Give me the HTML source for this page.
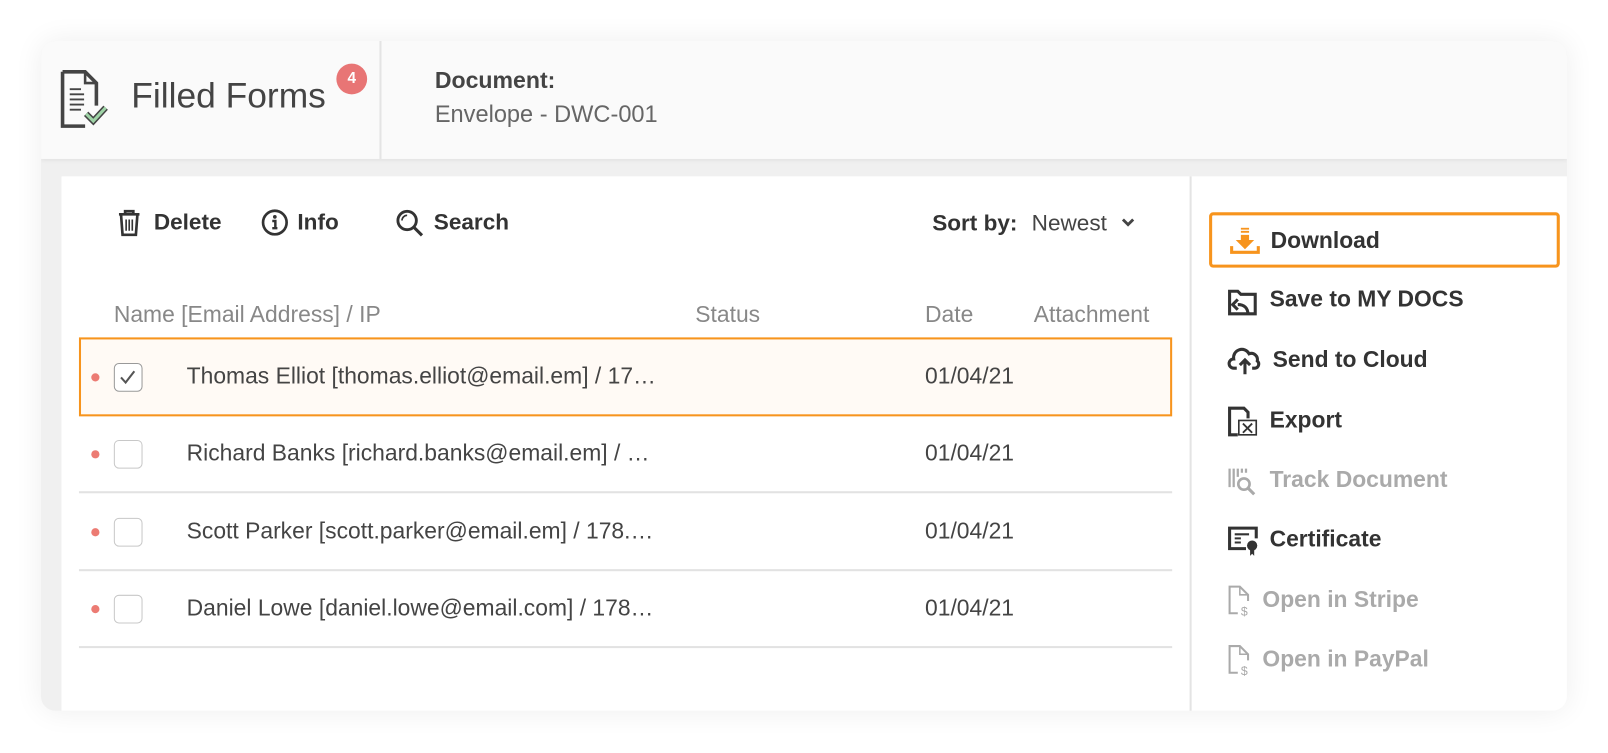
<!DOCTYPE html>
<html><head><meta charset="utf-8"><style>
*{box-sizing:border-box;margin:0;padding:0}
body{width:1608px;height:752px;background:#fff;font-family:"Liberation Sans",Arial,sans-serif;position:relative;overflow:hidden}
#w{position:absolute;left:0;top:0;width:1568px;height:734px;transform:scale(1.02551);transform-origin:0 0}
.card{position:absolute;left:40px;top:40px;width:1488px;height:653px;background:#f0f0f0;border-radius:14px;box-shadow:0 0 28px rgba(0,0,0,.07);overflow:hidden}
.hdr{position:absolute;left:0;top:0;width:1488px;height:115px;background:#fafafa;box-shadow:0 2px 4px rgba(0,0,0,.06)}
.abs{position:absolute}
.t{color:#333;font-weight:bold;font-size:22px}
.row{position:absolute;left:77px;width:1066px;height:76px;border-bottom:2px solid #e2e2e2}
.dot{position:absolute;left:12px;top:34px;width:8px;height:8px;border-radius:50%;background:#ec7b73}
.cb{position:absolute;left:34px;top:24px;width:28px;height:28px;border:1.5px solid #c8c8c8;border-radius:5px;background:#fff}
.nm{position:absolute;left:105px;top:24px;font-size:22.3px;color:#444}
.dt{position:absolute;left:825px;top:24px;font-size:22.3px;color:#444}
.it{position:absolute;left:1238px;font-size:22.3px;font-weight:bold;color:#333}
.gray{color:#aaa}
.th{position:absolute;top:294px;font-size:22.3px;color:#888}
</style></head><body><div id="w">
<div class="card">
 <div class="hdr">
  <svg class="abs" style="left:18px;top:27px" width="48" height="58" viewBox="0 0 48 58"><path d="M3 3h22l11 11v22M3 3v53h22" fill="none" stroke="#444" stroke-width="3.5"/><path d="M25 3v11h11" fill="none" stroke="#444" stroke-width="2.5"/><path d="M10 20h11M10 25h14M10 30h14M10 35h14M10 40h11" stroke="#444" stroke-width="1.8"/><path d="M26 44l7 7 12-13" fill="none" stroke="#444" stroke-width="6"/><path d="M26 44l7 7 12-13" fill="none" stroke="#9ed3a6" stroke-width="3"/></svg>
  <div class="abs" style="left:88px;top:35px;font-size:34.5px;color:#444">Filled Forms</div>
  <div class="abs" style="left:288px;top:22px;width:30px;height:30px;border-radius:50%;background:#e87575;color:#fff;font-size:15px;font-weight:bold;text-align:center;line-height:30px">4</div>
  <div class="abs" style="left:330px;top:0;width:2px;height:115px;background:#e4e4e4"></div>
  <div class="abs" style="left:384px;top:26px;font-size:22.5px;font-weight:bold;color:#444">Document:</div>
  <div class="abs" style="left:384px;top:58px;font-size:23px;color:#666">Envelope - DWC-001</div>
 </div>
</div>
<div class="abs" style="left:60px;top:172px;width:1468px;height:521px;background:#fff;border-bottom-right-radius:14px"></div>
<div class="abs" style="left:1160px;top:172px;width:2px;height:521px;background:#e4e4e4"></div>
<svg class="abs" style="left:114px;top:203px" width="24" height="28" viewBox="0 0 24 28"><path d="M2 6h20M8 6V3h8v3M4 6l1.5 20h13L20 6" fill="none" stroke="#333" stroke-width="2.6"/><path d="M9 11v11M12 11v11M15 11v11" stroke="#333" stroke-width="1.6"/></svg>
<div class="abs t" style="left:150px;top:204px">Delete</div>
<svg class="abs" style="left:254px;top:203px" width="28" height="28" viewBox="0 0 28 28"><circle cx="14" cy="14" r="11.5" fill="none" stroke="#333" stroke-width="2.6"/><circle cx="14" cy="8.5" r="1.8" fill="#333"/><path d="M11.5 12.5h3v7M11.5 19.5h5" fill="none" stroke="#333" stroke-width="2.4"/></svg>
<div class="abs t" style="left:290px;top:204px">Info</div>
<svg class="abs" style="left:385px;top:203px" width="30" height="30" viewBox="0 0 30 30"><circle cx="12" cy="12" r="9" fill="none" stroke="#333" stroke-width="2.8"/><path d="M18.5 18.5l8 8" stroke="#333" stroke-width="3"/><path d="M7 12a5 5 0 0 1 5-5" fill="none" stroke="#333" stroke-width="1.6"/></svg>
<div class="abs t" style="left:423px;top:204px">Search</div>
<div class="abs t" style="left:909px;top:205px">Sort by:</div>
<div class="abs" style="left:1006px;top:205px;font-size:22px;color:#444">Newest</div>
<svg class="abs" style="left:1093px;top:212px" width="14" height="10" viewBox="0 0 14 10"><path d="M2 2l5 5 5-5" fill="none" stroke="#444" stroke-width="2.8"/></svg>
<div class="th" style="left:111px">Name [Email Address] / IP</div>
<div class="th" style="left:678px">Status</div>
<div class="th" style="left:902px">Date</div>
<div class="th" style="left:1008px">Attachment</div>
<div class="abs" style="left:77px;top:329px;width:1066px;height:77px;border:2px solid #f7941d;background:#fffaf5"></div>
<div class="row" style="top:330px;border:none"><div class="dot"></div><div class="cb" style="border-color:#999"><svg width="25" height="25" viewBox="0 0 25 25"><path d="M6 13l4.5 5L19 7" fill="none" stroke="#555" stroke-width="2"/></svg></div><div class="nm">Thomas Elliot [thomas.elliot@email.em] / 17…</div><div class="dt">01/04/21</div></div>
<div class="row" style="top:405px"><div class="dot"></div><div class="cb"></div><div class="nm">Richard Banks [richard.banks@email.em] / …</div><div class="dt">01/04/21</div></div>
<div class="row" style="top:481px"><div class="dot"></div><div class="cb"></div><div class="nm">Scott Parker [scott.parker@email.em] / 178.…</div><div class="dt">01/04/21</div></div>
<div class="row" style="top:556px"><div class="dot"></div><div class="cb"></div><div class="nm">Daniel Lowe [daniel.lowe@email.com] / 178…</div><div class="dt">01/04/21</div></div>
<div class="abs" style="left:1179px;top:207px;width:342px;height:54px;border:3px solid #f7941d;border-radius:4px"></div>
<svg class="abs" style="left:1199px;top:222px" width="30" height="26" viewBox="0 0 30 26"><path d="M11 1h8M11 4h8" stroke="#f7941d" stroke-width="1.8"/><path d="M11 7h8v5h5l-9 9-9-9h5z" fill="#f7941d"/><path d="M2 18v6h26v-6" fill="none" stroke="#f7941d" stroke-width="3"/></svg>
<div class="it" style="left:1239px;top:222px">Download</div>
<svg class="abs" style="left:1197px;top:280px" width="32" height="30" viewBox="0 0 32 30"><path d="M2 26V4h8l3 3h14v19z" fill="none" stroke="#333" stroke-width="3"/><path d="M20 27c0-7-4-10-10-10M10 12l-5 5 5 5" fill="none" stroke="#333" stroke-width="3"/></svg>
<div class="it" style="top:279px">Save to MY DOCS</div>
<svg class="abs" style="left:1197px;top:337px" width="34" height="30" viewBox="0 0 34 30"><path d="M9 22H6a4 4 0 0 1 0-9 8 8 0 0 1 15-5 6 6 0 0 1 8 7 4 4 0 0 1-2 7h-3" fill="none" stroke="#333" stroke-width="3"/><path d="M17 28V14M12 19l5-5 5 5" fill="none" stroke="#333" stroke-width="3"/></svg>
<div class="it" style="left:1241px;top:338px">Send to Cloud</div>
<svg class="abs" style="left:1197px;top:396px" width="30" height="30" viewBox="0 0 30 30"><path d="M10 28H2V2h14l4 4v6" fill="none" stroke="#333" stroke-width="3"/><rect x="11" y="14" width="17" height="14" fill="#fff" stroke="#333" stroke-width="1.6"/><path d="M15 17l9 9M24 17l-9 9" stroke="#333" stroke-width="1.8"/></svg>
<div class="it" style="top:397px">Export</div>
<svg class="abs" style="left:1197px;top:455px" width="30" height="30" viewBox="0 0 30 30"><path d="M2 2v18M6 2v18M10 2v8M14 2v4M18 2v4" stroke="#aaa" stroke-width="2.2"/><circle cx="16" cy="17" r="5.5" fill="none" stroke="#aaa" stroke-width="2.6"/><path d="M20 21l6 6" stroke="#aaa" stroke-width="3"/></svg>
<div class="it gray" style="top:455px">Track Document</div>
<svg class="abs" style="left:1197px;top:513px" width="32" height="30" viewBox="0 0 32 30"><path d="M18 22H2V2h26v10" fill="none" stroke="#333" stroke-width="3"/><path d="M7 8h14M7 12h6M7 16h6" stroke="#333" stroke-width="2"/><circle cx="24" cy="19" r="5" fill="#333"/><path d="M22 23v6l2-2 2 2v-6" fill="#333"/></svg>
<div class="it" style="top:513px">Certificate</div>
<svg class="abs" style="left:1197px;top:570px" width="24" height="32" viewBox="0 0 24 32"><path d="M10 28H2V2h10l8 8v6" fill="none" stroke="#aaa" stroke-width="2"/><path d="M12 2v8h8" fill="none" stroke="#aaa" stroke-width="1.5"/><text x="13" y="30" font-size="12" fill="#aaa" font-family="Liberation Sans">$</text></svg>
<div class="it gray" style="left:1231px;top:572px">Open in Stripe</div>
<svg class="abs" style="left:1197px;top:628px" width="24" height="32" viewBox="0 0 24 32"><path d="M10 28H2V2h10l8 8v6" fill="none" stroke="#aaa" stroke-width="2"/><path d="M12 2v8h8" fill="none" stroke="#aaa" stroke-width="1.5"/><text x="13" y="30" font-size="12" fill="#aaa" font-family="Liberation Sans">$</text></svg>
<div class="it gray" style="left:1231px;top:630px">Open in PayPal</div>
</div></body></html>
